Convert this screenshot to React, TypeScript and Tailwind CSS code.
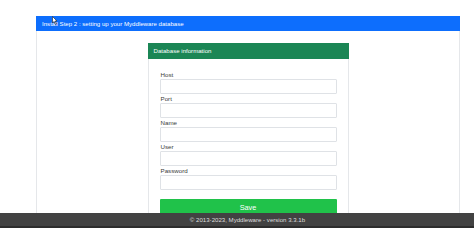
import React from "react";

const fields = ["Host", "Port", "Name", "User", "Password"];

export default function App() {
  return (
    <div className="relative h-[228px] w-[474px] overflow-hidden bg-white font-['Liberation_Sans',Arial,sans-serif]">
      <div className="pt-4 pl-9">
        {/* carte principale */}
        <div className="w-[424px] h-[240px] border border-[#e5e7ea]">
          <div className="h-[15px] -mx-px -mt-px bg-[#0d6efd] pl-[6px] flex items-center text-white text-[6.1px]">
            Install Step 2 : setting up your Myddleware database
          </div>
          <div className="pt-[12px] flex justify-center">
            <div className="w-[201px] h-[200px] border border-[#e5e7ea]">
              <div className="h-[16px] -mx-px -mt-px bg-[#1b8655] pl-[6px] flex items-center text-white text-[6.1px]">
                Database information
              </div>
              <div className="px-[11px] pt-[11px] flex flex-col">
                {fields.map((f) => (
                  <div key={f} className="flex flex-col">
                    <label className="h-[9px] leading-[9px] pl-px text-[6.2px] text-[#3a3a3a]">
                      {f}
                    </label>
                    <div className="h-[15px] border border-[#dfe2e6] rounded-[1px] bg-white" />
                  </div>
                ))}
                <button className="mt-[9px] h-[18px] rounded-[1px] bg-[#20c24a] text-white text-[7.3px] flex items-center justify-center">
                  Save
                </button>
              </div>
            </div>
          </div>
        </div>
      </div>

      {/* curseur */}
      <svg
        className="absolute left-[52px] top-[16px]"
        width="6"
        height="9"
        viewBox="0 0 12 18"
      >
        <path
          d="M1 1 L1 14 L4 11 L7 17 L9 16 L6 10 L10 10 Z"
          fill="#fff"
          stroke="#222"
          strokeWidth="1.2"
        />
      </svg>

      <footer className="absolute bottom-0 left-0 w-full h-[15px] bg-[#424242] border-b-2 border-[#2d2d2d] pl-[21px] flex items-center justify-center text-[6.1px] text-[#dedede]">
        © 2013-2023, Myddleware - version 3.3.1b
      </footer>
    </div>
  );
}
